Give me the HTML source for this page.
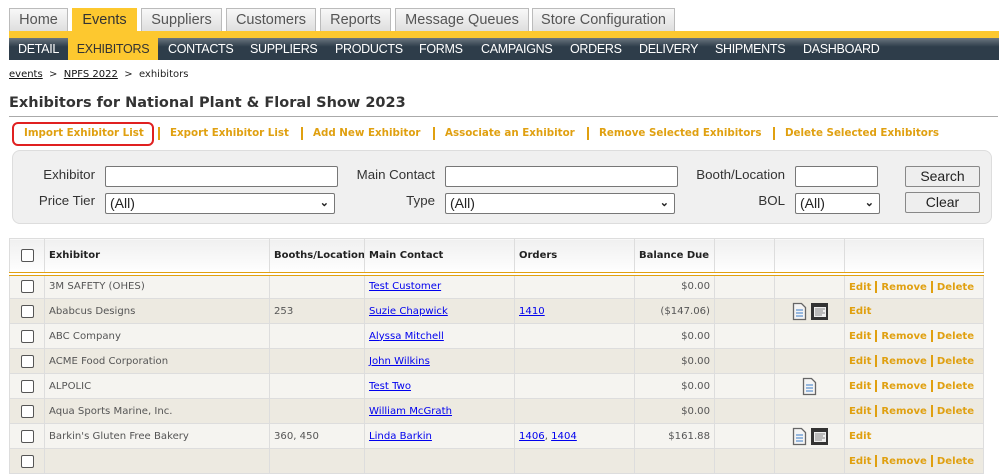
<!DOCTYPE html>
<html><head><meta charset="utf-8"><style>
*{box-sizing:border-box}
body{margin:0;width:1006px;height:455px;overflow:hidden;background:#fff;font-family:"Liberation Sans",Arial,sans-serif;position:relative}
.tab{position:absolute;top:8px;height:24px;border:1px solid #bbb;border-bottom:none;background:linear-gradient(#f8f8f8,#ddd);color:#555;font-size:14.5px;line-height:22px;text-align:center}
.tab.on{background:#fdc82f;border-color:#fdc82f;color:#333}
.ybar{position:absolute;left:9px;top:31px;width:990px;height:7px;background:#fdc82f}
.nav{position:absolute;left:9px;top:38px;width:990px;height:22px;background:linear-gradient(#6b7680,#2e3d4a 40%,#2e3d4a)}
.nav span{position:absolute;top:0;line-height:22px;color:#fff;font-size:12.5px;letter-spacing:-0.3px}
.bc{position:absolute;top:69px;left:9px;font-size:10px;font-family:"DejaVu Sans",sans-serif;color:#222}
.bc a{color:#111;text-decoration:underline}
h1{position:absolute;left:9px;top:95px;margin:0;font-size:14.5px;font-family:"DejaVu Sans",sans-serif;color:#333}
.hr{position:absolute;left:9px;top:116px;width:989px;height:1px;background:#aaa}
.act{position:absolute;top:127px;font-family:"DejaVu Sans",sans-serif;font-weight:bold;font-size:10.3px;color:#e0a010}
.sep{position:absolute;top:127px;width:2px;height:13px;background:#e0a010}
.red{position:absolute;left:12px;top:122px;width:142px;height:24px;border:2px solid #e02020;border-radius:6px}
.filt{position:absolute;left:12px;top:150px;width:980px;height:74px;background:#f0f0f0;border:1px solid #ddd;border-radius:8px}
.lbl{position:absolute;font-size:13.3px;color:#333;text-align:right}
.inp{position:absolute;height:21px;background:#fff;border:1px solid #777;border-radius:2px;font-size:14px;line-height:19px;padding-left:4px;color:#222}
.inp i{position:absolute;right:5px;top:0;font-style:normal;font-size:11px;font-weight:bold}
.btn{position:absolute;left:905px;width:75px;height:21px;border:1px solid #888;border-radius:2px;background:#eee;font-size:14px;text-align:center;line-height:19px;color:#222}
table{position:absolute;left:9px;top:238px;width:974px;border-collapse:collapse;table-layout:fixed;font-family:"DejaVu Sans",sans-serif;font-size:10.1px;color:#555}
td,th{border:1px solid #ddd;height:25px;padding:0 4px;white-space:nowrap;overflow:hidden}
th{background:linear-gradient(#f0f0f0,#fff);text-align:left;color:#222;font-size:10px;height:35px;border-bottom:4px double #e0a010}
tr.a td{background:#f5f4f0}tr.b td{background:#edeae1}
.cb{display:inline-block;width:13px;height:13px;border:1px solid #555;border-radius:2px;background:#fff;vertical-align:middle}
td:first-child,th:first-child{text-align:center}
a.l{color:#00e;text-decoration:underline}
.r{text-align:right}
.ac{color:#e0a010;font-weight:bold}
.ac b{display:inline-block;width:2px;height:12px;background:#e0a010;vertical-align:middle;margin:0 4px}
.ic{display:inline-block;vertical-align:middle;margin:0 2px}
</style></head><body>
<div class="tab" style="left:9px;width:59px">Home</div>
<div class="tab on" style="left:72px;width:65px">Events</div>
<div class="tab" style="left:141px;width:81px">Suppliers</div>
<div class="tab" style="left:226px;width:90px">Customers</div>
<div class="tab" style="left:320px;width:71px">Reports</div>
<div class="tab" style="left:395px;width:134px">Message Queues</div>
<div class="tab" style="left:532px;width:143px">Store Configuration</div>
<div class="ybar"></div>
<div class="nav">
<span style="left:9px">DETAIL</span>
<span style="left:59px;width:90px;background:#fdc82f;color:#333;text-align:center">EXHIBITORS</span>
<span style="left:159px">CONTACTS</span><span style="left:241px">SUPPLIERS</span><span style="left:326px">PRODUCTS</span><span style="left:410px">FORMS</span><span style="left:472px">CAMPAIGNS</span><span style="left:561px">ORDERS</span><span style="left:630px">DELIVERY</span><span style="left:706px">SHIPMENTS</span><span style="left:794px">DASHBOARD</span>
</div>
<div class="bc"><a>events</a> &nbsp;&gt;&nbsp; <a>NPFS 2022</a> &nbsp;&gt;&nbsp; exhibitors</div>
<h1>Exhibitors for National Plant &amp; Floral Show 2023</h1>
<div class="hr"></div>
<div class="red"></div>
<div class="act" style="left:24px">Import Exhibitor List</div>
<div class="sep" style="left:158px"></div><div class="act" style="left:170px">Export Exhibitor List</div>
<div class="sep" style="left:301px"></div><div class="act" style="left:313px">Add New Exhibitor</div>
<div class="sep" style="left:433px"></div><div class="act" style="left:445px">Associate an Exhibitor</div>
<div class="sep" style="left:587px"></div><div class="act" style="left:599px">Remove Selected Exhibitors</div>
<div class="sep" style="left:773px"></div><div class="act" style="left:785px">Delete Selected Exhibitors</div>
<div class="filt"></div>
<div class="lbl" style="left:20px;width:75px;top:167px">Exhibitor</div>
<div class="inp" style="left:105px;top:166px;width:233px"></div>
<div class="lbl" style="left:20px;width:75px;top:193px">Price Tier</div>
<div class="inp" style="left:105px;top:193px;width:230px">(All)<i>&#8964;</i></div>
<div class="lbl" style="left:340px;width:95px;top:167px">Main Contact</div>
<div class="inp" style="left:445px;top:166px;width:233px"></div>
<div class="lbl" style="left:340px;width:95px;top:193px">Type</div>
<div class="inp" style="left:445px;top:193px;width:230px">(All)<i>&#8964;</i></div>
<div class="lbl" style="left:680px;width:105px;top:167px">Booth/Location</div>
<div class="inp" style="left:795px;top:166px;width:83px"></div>
<div class="lbl" style="left:680px;width:105px;top:193px">BOL</div>
<div class="inp" style="left:795px;top:193px;width:85px">(All)<i>&#8964;</i></div>
<div class="btn" style="top:166px">Search</div>
<div class="btn" style="top:192px">Clear</div>
<table>
<colgroup><col style="width:35px"><col style="width:225px"><col style="width:95px"><col style="width:150px"><col style="width:120px"><col style="width:80px"><col style="width:60px"><col style="width:70px"><col style="width:139px"></colgroup>
<tr><th><span class="cb"></span></th><th>Exhibitor</th><th>Booths/Locations</th><th>Main Contact</th><th>Orders</th><th>Balance Due</th><th></th><th></th><th></th></tr>
<tr class="a"><td><span class="cb"></span></td><td>3M SAFETY (OHES)</td><td></td><td><a class="l">Test Customer</a></td><td></td><td class="r">$0.00</td><td></td><td></td><td class="ac">Edit<b></b>Remove<b></b>Delete</td></tr>
<tr class="b"><td><span class="cb"></span></td><td>Ababcus Designs</td><td>253</td><td><a class="l">Suzie Chapwick</a></td><td><a class="l">1410</a></td><td class="r">($147.06)</td><td></td><td style="text-align:center"><svg class="ic" width="15" height="19"><path d="M1.5 1.5h8l4 4v12h-12z" fill="#f4f4f4" stroke="#666" stroke-width="1.3"/><path d="M4 8h7M4 11h7M4 14h7" stroke="#3a7bc8"/></svg><svg class="ic" width="17" height="17"><rect x="0" y="0" width="17" height="17" fill="#333"/><rect x="3" y="4" width="12" height="10" fill="#eee"/><path d="M4 6h10M4 8h8M4 10h10M4 12h7" stroke="#888"/></svg></td><td class="ac">Edit</td></tr>
<tr class="a"><td><span class="cb"></span></td><td>ABC Company</td><td></td><td><a class="l">Alyssa Mitchell</a></td><td></td><td class="r">$0.00</td><td></td><td></td><td class="ac">Edit<b></b>Remove<b></b>Delete</td></tr>
<tr class="b"><td><span class="cb"></span></td><td>ACME Food Corporation</td><td></td><td><a class="l">John Wilkins</a></td><td></td><td class="r">$0.00</td><td></td><td></td><td class="ac">Edit<b></b>Remove<b></b>Delete</td></tr>
<tr class="a"><td><span class="cb"></span></td><td>ALPOLIC</td><td></td><td><a class="l">Test Two</a></td><td></td><td class="r">$0.00</td><td></td><td style="text-align:center"><svg class="ic" width="15" height="19"><path d="M1.5 1.5h8l4 4v12h-12z" fill="#f4f4f4" stroke="#666" stroke-width="1.3"/><path d="M4 8h7M4 11h7M4 14h7" stroke="#3a7bc8"/></svg></td><td class="ac">Edit<b></b>Remove<b></b>Delete</td></tr>
<tr class="b"><td><span class="cb"></span></td><td>Aqua Sports Marine, Inc.</td><td></td><td><a class="l">William McGrath</a></td><td></td><td class="r">$0.00</td><td></td><td></td><td class="ac">Edit<b></b>Remove<b></b>Delete</td></tr>
<tr class="a"><td><span class="cb"></span></td><td>Barkin's Gluten Free Bakery</td><td>360, 450</td><td><a class="l">Linda Barkin</a></td><td><a class="l">1406</a>, <a class="l">1404</a></td><td class="r">$161.88</td><td></td><td style="text-align:center"><svg class="ic" width="15" height="19"><path d="M1.5 1.5h8l4 4v12h-12z" fill="#f4f4f4" stroke="#666" stroke-width="1.3"/><path d="M4 8h7M4 11h7M4 14h7" stroke="#3a7bc8"/></svg><svg class="ic" width="17" height="17"><rect x="0" y="0" width="17" height="17" fill="#333"/><rect x="3" y="4" width="12" height="10" fill="#eee"/><path d="M4 6h10M4 8h8M4 10h10M4 12h7" stroke="#888"/></svg></td><td class="ac">Edit</td></tr>
<tr class="b"><td><span class="cb"></span></td><td></td><td></td><td></td><td></td><td></td><td></td><td></td><td class="ac">Edit<b></b>Remove<b></b>Delete</td></tr>
</table>
</body></html>
